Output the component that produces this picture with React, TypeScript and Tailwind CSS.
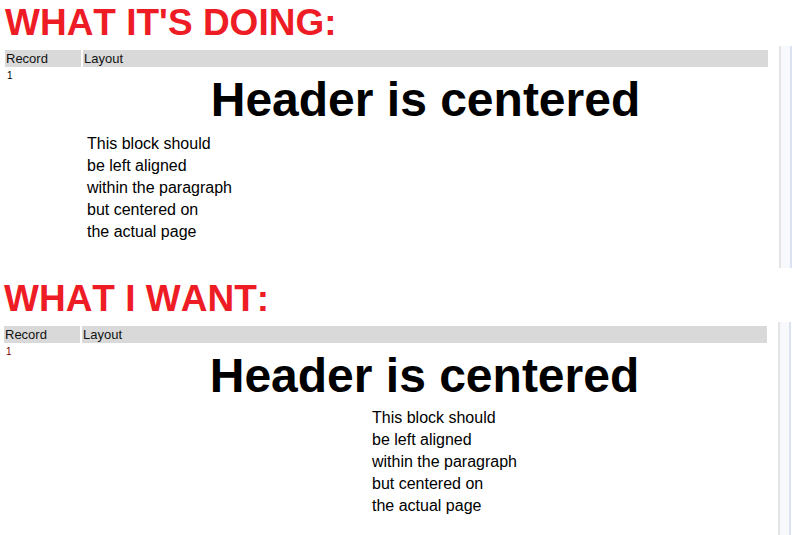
const lines = ['This block should', 'be left aligned', 'within the paragraph', 'but centered on', 'the actual page'];

interface SectionProps {
  title: string;
  want?: boolean;
}

function Section({ title, want = false }: SectionProps) {
  return (
    <section className={`h-[276px] flex flex-col ${want ? '-ml-px' : ''}`}>
      <h1 className="pl-[5px] pt-[5px] h-[46px] text-[37px] leading-[36px] font-bold text-[#ee1c25] [font-kerning:none]">
        {title}
      </h1>
      <div className="flex h-[222px]">
        <div className="w-[768px] pt-[4px]">
          <div className="flex gap-[2px] pl-[5px] text-[13px] leading-[17px] text-[#111]">
            <div className="w-[76px] bg-[#d9d9d9] pl-[1px]">Record</div>
            <div className="flex-1 bg-[#d9d9d9] pl-[1px]">Layout</div>
          </div>
          <div className="flex gap-[2px] pl-[5px]">
            <div className={`w-[76px] pl-[2px] pt-[3px] text-[10px] leading-[12px] ${want ? 'text-[#800000]' : 'text-black'}`}>
              1
            </div>
            <div className="flex-1">
              <h2 className="mt-[5px] text-center text-[48px] leading-[55px] font-bold text-black">
                Header is centered
              </h2>
              <p className={`text-[16px] leading-[22px] text-black ${want ? 'mt-[4px] pl-[290px]' : 'mt-[6px] pl-[4px]'}`}>
                {lines.map((l) => (
                  <span key={l} className="block">
                    {l}
                  </span>
                ))}
              </p>
            </div>
          </div>
        </div>
        <div className="ml-[11px] w-[13px] border-l-2 border-l-[#e4e4e4] border-r-2 border-r-[#dce3f0] bg-[#f8f9fc]" />
      </div>
    </section>
  );
}

export default function App() {
  return (
    <div className="w-[796px] h-[535px] overflow-hidden bg-white font-['Liberation_Sans',Arial,sans-serif]">
      <Section title="WHAT IT'S DOING:" />
      <Section title="WHAT I WANT:" want />
    </div>
  );
}
